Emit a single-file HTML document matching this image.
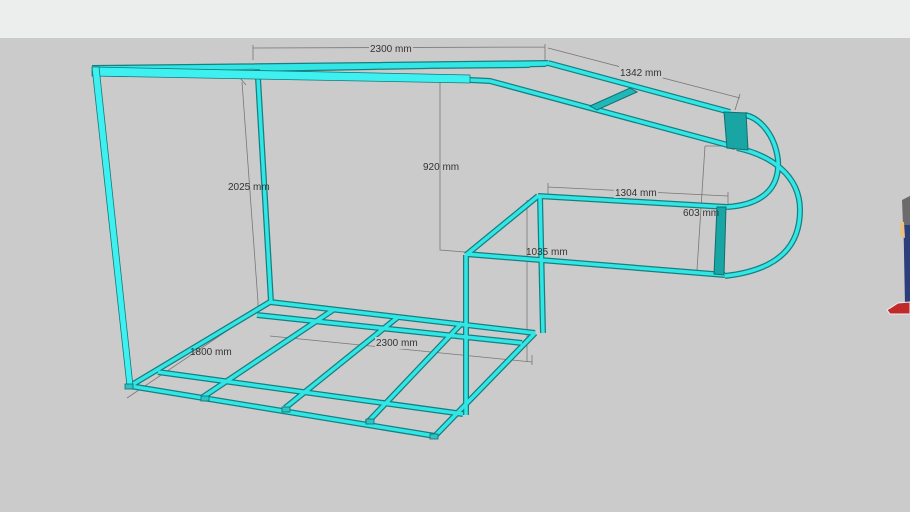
<!DOCTYPE html>
<html><head><meta charset="utf-8"><style>
html,body{margin:0;padding:0;width:910px;height:512px;overflow:hidden;background:#cbcbcb}
svg{display:block}
.d{font-family:"Liberation Sans",sans-serif;font-size:10px;fill:#333}
.dim{stroke:#777;stroke-width:0.8;fill:none}
</style></head><body>
<svg width="910" height="512" viewBox="0 0 910 512" xmlns="http://www.w3.org/2000/svg">
<rect x="0" y="0" width="910" height="38" fill="#eceeee"/>
<rect x="0" y="38" width="910" height="474" fill="#cbcbcb"/>

<g class="dim">
<path d="M253,48 L545,47 M253,45 L253,60 M545,44 L545,62"/>
<path d="M548,48 L740,98 M740,94 L735,110"/>
<path d="M242,82 L258,302 M240,78 L246,85"/>
<path d="M440,80 L440,250 L465,252"/>
<path d="M548,187 L728,196 M548,183 L548,195 M728,192 L728,205"/>
<path d="M705,146 L735,146 M705,146 L697,270"/>
<path d="M527,200 L527,362"/>
<path d="M127,398 L258,310 M258,310 L258,302"/>
<path d="M270,336 L532,362 M532,355 L532,365"/>
</g>

<defs>
<path id="pFrame" d="
M258,78 L271,302
M92,68 L548,63
M470,80 L490,81 L735,147
M548,63 L730,112
M130,386 L270,302
M130,386 L435,436
M158,372 L463,414
M270,302 L535,333
M257,315 L522,343
M535,333 L435,436
M203,397 L333,310
M285,408 L398,317
M367,423 L462,323
M466,255 L466,415
M540,196 L543,333
M466,255 L538,196
M538,196 L727,207
M466,254 L725,275
M140,68 L500,64 M200,68 L530,65 M260,69 L546,64
M727,207 C760,205 780,190 778,160 C775,135 760,118 745,115
M737,148 C770,155 800,175 800,210 C800,245 780,270 725,276
"/>
</defs>
<use href="#pFrame" stroke="#167f7f" stroke-width="6" fill="none" stroke-linejoin="round"/>
<use href="#pFrame" stroke="#33e6e6" stroke-width="3.5" fill="none" stroke-linejoin="round"/>
<path d="M92,67 L470,75 L470,83 L92,76 Z" fill="#3ff0f0" stroke="#137a7a" stroke-width="0.8"/>
<path d="M92,67 L99,67 L133,386 L127,386 Z" fill="#3ff0f0" stroke="#137a7a" stroke-width="0.8"/>
<path d="M724,112 L746,113 L748,150 L727,148 Z" fill="#1aa5a5" stroke="#0e6f6f"/>
<path d="M717,207 L726,207 L724,275 L714,274 Z" fill="#1aa5a5" stroke="#0e6f6f"/>
<path d="M590,106 L630,88 L637,92 L597,110 Z" fill="#1fb8b8" stroke="#0e6f6f"/>
<g fill="#2cc4c4" stroke="#0e6f6f" stroke-width="0.8">
<rect x="125" y="384" width="8" height="5"/><rect x="201" y="396" width="8" height="5"/>
<rect x="282" y="407" width="8" height="5"/><rect x="366" y="419" width="8" height="5"/>
<rect x="430" y="434" width="8" height="5"/>
</g>

<path d="M903,200 L910,196 L910,305 L905,305 Z" fill="#2c3f7a"/>
<path d="M902,200 L910,196 L910,225 L903,225 Z" fill="#6b6b6b"/>
<path d="M900,222 L904,222 L905,238 L900,236 Z" fill="#e8c08a"/>
<path d="M887,310 L898,303 L910,302 L910,314 L890,314 Z" fill="#c12a2a" stroke="#eee" stroke-width="1"/>

<g class="d">
<rect x="369" y="42" width="44" height="12" fill="#cbcbcb"/><text x="370" y="52">2300 mm</text>
<rect x="619" y="66" width="44" height="12" fill="#cbcbcb"/><text x="620" y="76">1342 mm</text>
<text x="228" y="190">2025 mm</text>
<text x="423" y="170">920 mm</text>
<rect x="614" y="186" width="44" height="12" fill="#cbcbcb"/><text x="615" y="196">1304 mm</text>
<text x="683" y="216">603 mm</text>
<text x="526" y="255">1035 mm</text>
<text x="190" y="355">1800 mm</text>
<rect x="375" y="337" width="44" height="12" fill="#cbcbcb"/><text x="376" y="346">2300 mm</text>
</g>
</svg>
</body></html>
